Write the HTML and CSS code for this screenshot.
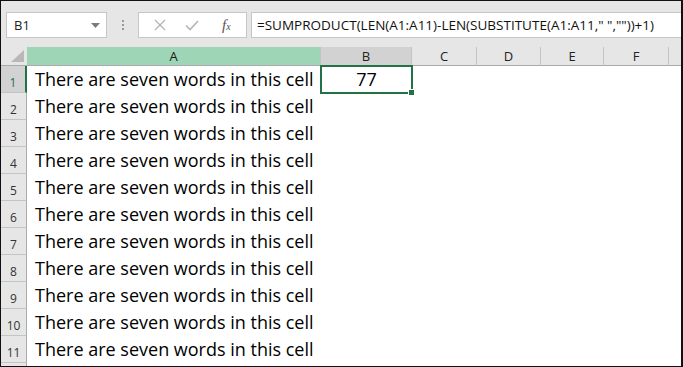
FILE: index.html
```html
<!DOCTYPE html>
<html lang="en">
<head>
    <meta charset="UTF-8">
    <title>Word count</title>
    <link rel="stylesheet" href="styles.css">
</head>
<body>
    <div class="window">
        <div class="toolbar">
            <div class="name-box">
                <span>B1</span>
                <svg class="caret" width="9" height="5" viewBox="0 0 9 5"><path d="M0 0h9L4.5 5z" fill="#7a7a7a"/></svg>
            </div>
            <div class="grip"><i></i><i></i><i></i></div>
            <div class="fx-box">
                <svg width="12" height="12" viewBox="0 0 12 12"><path d="M1 1l10 10M11 1L1 11" stroke="#b4b4b4" stroke-width="1.3" fill="none"/></svg>
                <svg width="14" height="11" viewBox="0 0 14 11"><path d="M1 5.5l4 4L13 1" stroke="#b4b4b4" stroke-width="1.6" fill="none"/></svg>
                <span class="fx"><i>f</i><small>x</small></span>
            </div>
            <div class="formula">=SUMPRODUCT(LEN(A1:A11)-LEN(SUBSTITUTE(A1:A11," ",""))+1)</div>
        </div>
        <div class="sheet">
            <div class="row head">
                <div class="corner">
                    <svg width="13" height="12" viewBox="0 0 13 12"><path d="M13 0v12H0z" fill="#b8b8b8"/></svg>
                </div>
                <div class="col a on">A</div>
                <div class="col b sel">B</div>
                <div class="col c">C</div>
                <div class="col d">D</div>
                <div class="col e">E</div>
                <div class="col f">F</div>
                <div class="col g"></div>
            </div>
            <div class="row">
                <div class="num active">1</div>
                <div class="cell a">There are seven words in this cell</div>
                <div class="cell b current">77</div>
            </div>
            <div class="row"><div class="num">2</div><div class="cell a">There are seven words in this cell</div></div>
            <div class="row"><div class="num">3</div><div class="cell a">There are seven words in this cell</div></div>
            <div class="row"><div class="num">4</div><div class="cell a">There are seven words in this cell</div></div>
            <div class="row"><div class="num">5</div><div class="cell a">There are seven words in this cell</div></div>
            <div class="row"><div class="num">6</div><div class="cell a">There are seven words in this cell</div></div>
            <div class="row"><div class="num">7</div><div class="cell a">There are seven words in this cell</div></div>
            <div class="row"><div class="num">8</div><div class="cell a">There are seven words in this cell</div></div>
            <div class="row"><div class="num">9</div><div class="cell a">There are seven words in this cell</div></div>
            <div class="row"><div class="num">10</div><div class="cell a">There are seven words in this cell</div></div>
            <div class="row"><div class="num">11</div><div class="cell a">There are seven words in this cell</div></div>
            <div class="row"><div class="num"></div></div>
        </div>
    </div>
</body>
</html>
```

FILE: styles.css
```css
body {
    margin: 0;
    font-family: "Open Sans", "Noto Sans", sans-serif;
    color: #000;
}
.window {
    width: 683px;
    height: 367px;
    box-sizing: border-box;
    border: 1px solid #111;
    border-right-width: 2px;
    background-color: #fff;
    overflow: hidden;
}
.toolbar {
    height: 46px;
    background-color: #e6e6e6;
    display: flex;
    align-items: center;
    padding-left: 5px;
    box-sizing: border-box;
    padding-top: 2px;
}
.name-box {
    width: 101px;
    height: 26px;
    box-sizing: border-box;
    background-color: #fff;
    border: 1px solid #c6c6c6;
    display: flex;
    align-items: center;
    justify-content: space-between;
    padding: 0 6px 0 7px;
    font-size: 13px;
    color: #222;
}
.grip {
    width: 31px;
    display: flex;
    flex-direction: column;
    align-items: center;
    gap: 2px;
}
.grip i {
    width: 2px;
    height: 2px;
    background-color: #9a9a9a;
}
.fx-box {
    width: 109px;
    height: 26px;
    box-sizing: border-box;
    background-color: #fff;
    border: 1px solid #c6c6c6;
    display: flex;
    align-items: center;
    padding: 0 12px 0 15px;
    gap: 19px;
}
.fx {
    margin-left: 4px;
    font-family: "Liberation Serif", serif;
    color: #555;
    font-size: 15px;
}
.fx small {
    font-size: 10px;
    font-style: italic;
}
.formula {
    flex: 1;
    margin-left: 4px;
    height: 26px;
    box-sizing: border-box;
    background-color: #fff;
    border: 1px solid #c6c6c6;
    border-right: none;
    padding-left: 5px;
    line-height: 24px;
    font-size: 13.5px;
    color: #111;
    white-space: nowrap;
}
.row {
    display: flex;
    height: 27px;
}
.row.head {
    height: 19px;
}
.corner {
    width: 26px;
    flex: none;
    background-color: #e6e6e6;
    border-bottom: 1px solid #ababab;
    box-sizing: border-box;
    display: flex;
    align-items: flex-end;
    justify-content: flex-end;
    padding: 0 3px 3px 0;
}
.col {
    flex: none;
    box-sizing: border-box;
    background-color: #e6e6e6;
    border-right: 1px solid #c4c4c4;
    border-bottom: 1px solid #ababab;
    font-size: 13px;
    line-height: 18px;
    text-align: center;
    color: #222;
}
.col.on {
    background-color: #9fd5b7;
    color: #1a1a1a;
}
.col.sel {
    background-color: #d2d2d2;
}
.a { width: 294px; }
.b { width: 91px; }
.c { width: 65px; }
.d { width: 64px; }
.e { width: 63px; }
.f { width: 65px; }
.col.g {
    flex: 1;
    border-right: none;
}
.num {
    width: 26px;
    flex: none;
    box-sizing: border-box;
    background-color: #e6e6e6;
    border-right: 1px solid #ababab;
    border-bottom: 1px solid #c4c4c4;
    font-size: 12px;
    color: #333;
    display: flex;
    align-items: flex-end;
    justify-content: center;
    padding-bottom: 1px;
}
.num.active {
    background-color: #d2d2d2;
    border-right: 2px solid #217346;
    color: #217346;
}
.cell {
    flex: none;
    box-sizing: border-box;
    font-size: 18px;
    line-height: 27px;
    padding-left: 8px;
    white-space: nowrap;
}
.cell.b {
    text-align: center;
    padding-left: 0;
}
.current {
    position: relative;
}
.current::after {
    content: "";
    position: absolute;
    left: -1px;
    top: -1px;
    right: -1px;
    bottom: -1px;
    border: 2px solid #217346;
}
.current::before {
    content: "";
    position: absolute;
    right: -3px;
    bottom: -3px;
    width: 5px;
    height: 5px;
    background-color: #217346;
    border: 1px solid #fff;
    z-index: 1;
}
```
